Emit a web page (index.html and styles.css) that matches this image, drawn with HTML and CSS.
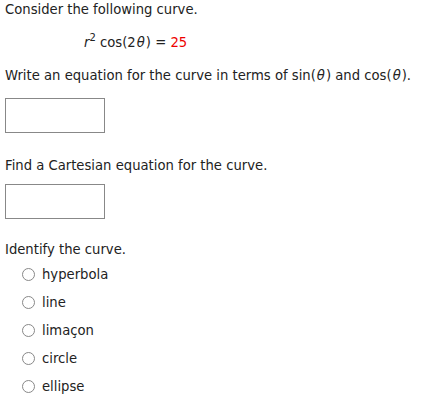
FILE: index.html
```html
<!DOCTYPE html>
<html>
<head>
<meta charset="utf-8">
<link rel="stylesheet" href="styles.css">
</head>
<body>
<div class="page">
  <p class="line first">Consider the following curve.</p>
  <p class="eq"><span class="var">r</span><sup>2</sup> cos(2<span class="th">θ</span>) = <span class="red">25</span></p>
  <p class="line q2">Write an equation for the curve in terms of sin(<span class="th">θ</span>) and cos(<span class="th">θ</span>).</p>
  <div class="box"></div>
  <p class="line q3">Find a Cartesian equation for the curve.</p>
  <div class="box box2"></div>
  <p class="line q4">Identify the curve.</p>
  <ul class="opts">
    <li><span class="radio"></span>hyperbola</li>
    <li><span class="radio"></span>line</li>
    <li><span class="radio"></span>limaçon</li>
    <li><span class="radio"></span>circle</li>
    <li><span class="radio"></span>ellipse</li>
  </ul>
</div>
</body>
</html>
```
FILE: styles.css
```css
html, body { margin: 0; padding: 0; background: #fff; }
body { font-family: "DejaVu Sans", Verdana, sans-serif; font-size: 13.2px; color: #222; }
.page { padding: 2px 5px 0 5px; }
p { margin: 0; line-height: 16px; }
.eq { padding-left: 79px; margin-top: 17px; }
.eq sup { font-size: 10px; vertical-align: 6px; line-height: 0; }
.var, .th { font-style: italic; }
.th { padding: 0 1px; }
.red { color: #e00; }
.q2 { margin-top: 17px; }
.box { width: 98px; height: 33px; border: 1px solid #888; margin-top: 14px; }
.q3 { margin-top: 25px; }
.box2 { margin-top: 10px; }
.q4 { margin-top: 23px; }
.opts { list-style: none; margin: 3px 0 0 0; padding: 0 0 0 17px; }
.opts li { display: flex; align-items: center; height: 27.8px; }
.radio { width: 11px; height: 11px; border: 1px solid #888; border-radius: 50%; margin-right: 7px; box-sizing: content-box; }
```
